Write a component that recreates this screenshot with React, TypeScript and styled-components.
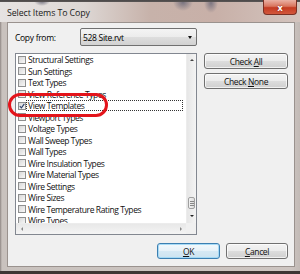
import React from "react";
import styled, { createGlobalStyle } from "styled-components";

const Global = createGlobalStyle`
  html, body { margin: 0; padding: 0; background: #3d3634; }
  body { width: 300px; height: 274px; overflow: hidden; }
  * { box-sizing: border-box; }
`;

const Window = styled.div`
  width: 300px;
  height: 274px;
  display: flex;
  flex-direction: column;
  background: linear-gradient(to right, #8f8784 0, #c9c2be 2px, #cdc5c1 97%, #c2bab6 100%);
  border-bottom: 3px solid #3e3634;
  font-family: "Open Sans", "Noto Sans", sans-serif;
  color: #000;
`;

const TitleBar = styled.div`
  height: 22px;
  flex: none;
  display: flex;
  align-items: center;
  padding-left: 7px;
  background:
    linear-gradient(#4b4848 0, #5a5655 2px, transparent 2px),
    radial-gradient(ellipse 8px 5px at 42px 1px, rgba(60, 60, 80, 0.7), transparent),
    radial-gradient(ellipse 10px 9px at 183px 2px, rgba(50, 60, 90, 0.55), transparent),
    radial-gradient(ellipse 7px 10px at 211px 3px, rgba(50, 60, 90, 0.5), transparent),
    linear-gradient(to right, #e6e3e2 0%, #ddd7d4 28%, #c7b2aa 50%, #c8b0a8 72%, #d3c4be 100%);
`;

const Title = styled.span`
  font-size: 8.8px;
  letter-spacing: -0.1px;
  color: #1a1a1a;
  padding-top: 3px;
  flex: 1;
`;

const CloseButton = styled.div`
  align-self: flex-start;
  width: 34px;
  height: 15px;
  margin-right: 3px;
  border: 1px solid #7a3024;
  border-top: none;
  border-radius: 0 0 4px 4px;
  background: linear-gradient(#eab1a4 0%, #d9745d 45%, #c43b22 55%, #d2573c 100%);
  color: #fff;
  font-size: 9px;
  font-weight: bold;
  display: flex;
  align-items: center;
  justify-content: center;
  text-shadow: 0 0 2px #7a2010;
`;

const Client = styled.div`
  position: relative;
  height: 245px;
  margin: 0 5px 0 7px;
  border: 1px solid #9a928e;
  background: #f0f0f0;
  padding: 5px 6px 7px 7px;
  display: grid;
  grid-template-columns: 182px 84px;
  grid-template-rows: 18px 182px 16px;
  column-gap: 7px;
  row-gap: 7px;
  font-size: 8.5px;
`;

const BottomFrame = styled.div`
  height: 4px;
  flex: none;
`;

const CopyRow = styled.div`
  grid-column: 1;
  grid-row: 1;
  display: flex;
  align-items: center;
`;

const FieldLabel = styled.span`
  width: 65px;
  letter-spacing: -0.3px;
`;

const Combo = styled.div`
  width: 117px;
  height: 18px;
  border: 1px solid #707070;
  border-radius: 2px;
  background: linear-gradient(#f4f4f4 0%, #ececec 50%, #dedede 50%, #d2d2d2 100%);
  display: flex;
  align-items: center;
  padding: 0 4px 0 2px;
`;

const ComboText = styled.span`
  flex: 1;
  letter-spacing: -0.3px;
`;

const Caret = styled.span`
  width: 0;
  height: 0;
  border-left: 2.5px solid transparent;
  border-right: 2.5px solid transparent;
  border-top: 3px solid #111;
`;

const ListBox = styled.div`
  grid-column: 1;
  grid-row: 2;
  border: 1px solid #828790;
  background: #fff;
  display: grid;
  grid-template-columns: 1fr 10px;
  grid-template-rows: 1fr 11px;
  overflow: hidden;
`;

const Items = styled.div`
  overflow: hidden;
  grid-column: 1;
  grid-row: 1;
`;

const Row = styled.div`
  height: 11.5px;
  display: flex;
  align-items: center;
  padding-left: 2px;
`;

const Box = styled.span`
  width: 8px;
  height: 8px;
  flex: none;
  border: 1px solid #8e8f8f;
  background: linear-gradient(135deg, #d8d8d8, #f8f8f8);
  display: flex;
  align-items: center;
  justify-content: center;
`;

const ItemLabel = styled.span<{ $focused?: boolean }>`
  flex: 1;
  margin-right: 3px;
  padding-left: 1px;
  border: 1px dotted ${(p) => (p.$focused ? "#333" : "transparent")};
  height: 11px;
  line-height: 9px;
  font-size: 8.5px;
  letter-spacing: -0.4px;
  white-space: nowrap;
  color: #111;
`;

const VScroll = styled.div`
  grid-column: 2;
  grid-row: 1;
  display: flex;
  flex-direction: column;
  background: linear-gradient(to right, #e6e6e6, #f4f4f4);
  border-left: 1px solid #ececec;
`;

const ArrowCell = styled.div<{ $h?: number }>`
  height: ${(p) => p.$h ?? 11}px;
  width: ${(p) => (p.$h ? "auto" : "11px")};
  flex: none;
  display: flex;
  align-items: center;
  justify-content: center;
`;

const Tri = styled.span<{ $dir: "up" | "down" | "left" | "right"; $c?: string }>`
  width: 0;
  height: 0;
  ${(p) =>
    p.$dir === "up"
      ? `border-left: 2px solid transparent; border-right: 2px solid transparent; border-bottom: 2px solid ${p.$c ?? "#444"};`
      : p.$dir === "down"
      ? `border-left: 2.5px solid transparent; border-right: 2.5px solid transparent; border-top: 2.5px solid ${p.$c ?? "#222"};`
      : p.$dir === "left"
      ? `border-top: 2px solid transparent; border-bottom: 2px solid transparent; border-right: 2px solid ${p.$c ?? "#888"};`
      : `border-top: 2px solid transparent; border-bottom: 2px solid transparent; border-left: 2px solid ${p.$c ?? "#888"};`}
`;

const Track = styled.div`
  flex: 1;
  display: flex;
  flex-direction: column;
  justify-content: flex-end;
  padding: 0 1px;
`;

const Thumb = styled.div`
  height: 12px;
  border: 1px solid #a0a0a0;
  border-radius: 2px;
  background: linear-gradient(to right, #f2f2f2, #dedede);
  display: flex;
  flex-direction: column;
  align-items: center;
  justify-content: center;
  gap: 1px;
`;

const Grip = styled.span`
  width: 4px;
  height: 1px;
  background: #888;
`;

const HScroll = styled.div`
  grid-column: 1;
  grid-row: 2;
  display: flex;
  align-items: center;
  background: linear-gradient(#e8e8e8, #f4f4f4);
  border-top: 1px solid #ececec;
`;

const HTrack = styled.div`
  flex: 1;
`;

const Corner = styled.div`
  grid-column: 2;
  grid-row: 2;
  background: #f0f0f0;
`;

const SideButtons = styled.div`
  grid-column: 2;
  grid-row: 2;
  display: flex;
  flex-direction: column;
  gap: 4px;
  align-self: start;
`;

const Button = styled.div<{ $w?: number; $default?: boolean }>`
  width: ${(p) => (p.$w ? `${p.$w}px` : "100%")};
  height: 16px;
  border: 1px solid ${(p) => (p.$default ? "#3c7fb1" : "#707070")};
  border-radius: 3px;
  background: ${(p) =>
    p.$default
      ? "linear-gradient(#f3f9fc 0%, #e6f1f8 50%, #d6e9f4 50%, #cde3f0 100%)"
      : "linear-gradient(#f3f3f3 0%, #ebebeb 50%, #dddddd 50%, #d0d0d0 100%)"};
  box-shadow: inset 0 0 0 1px ${(p) => (p.$default ? "rgba(160, 215, 245, 0.9)" : "rgba(255,255,255,0.7)")};
  display: flex;
  align-items: center;
  justify-content: center;
  font-size: 8.5px;
  letter-spacing: -0.35px;
  color: #111;
`;

const U = styled.span`
  text-decoration: underline;
`;

const BottomBar = styled.div`
  grid-column: 1 / 3;
  grid-row: 3;
  display: flex;
  justify-content: flex-end;
  gap: 6px;
  margin-top: 1px;
`;

const Annotation = styled.div`
  position: absolute;
  left: 0;
  top: 70px;
  width: 100px;
  height: 24px;
  border: 3px solid #e3141b;
  border-radius: 12px;
  pointer-events: none;
`;

const items = [
  "Structural Settings",
  "Sun Settings",
  "Text Types",
  "View Reference Types",
  "View Templates",
  "Viewport Types",
  "Voltage Types",
  "Wall Sweep Types",
  "Wall Types",
  "Wire Insulation Types",
  "Wire Material Types",
  "Wire Settings",
  "Wire Sizes",
  "Wire Temperature Rating Types",
  "Wire Types",
];

const Check = () => (
  <svg width="6" height="6" viewBox="0 0 6 6">
    <path d="M0.8 3.2 L2.4 4.8 L5.3 0.9" fill="none" stroke="#2a3f6b" strokeWidth="1.1" />
  </svg>
);

export default function App() {
  return (
    <>
      <Global />
      <Window>
        <TitleBar>
          <Title>Select Items To Copy</Title>
          <CloseButton>x</CloseButton>
        </TitleBar>
        <Client>
          <CopyRow>
            <FieldLabel>Copy from:</FieldLabel>
            <Combo>
              <ComboText>528 Site.rvt</ComboText>
              <Caret />
            </Combo>
          </CopyRow>
          <ListBox>
            <Items>
              {items.map((it) => {
                const sel = it === "View Templates";
                return (
                  <Row key={it}>
                    <Box>{sel && <Check />}</Box>
                    <ItemLabel $focused={sel}>{it}</ItemLabel>
                  </Row>
                );
              })}
            </Items>
            <VScroll>
              <ArrowCell $h={11}>
                <Tri $dir="up" />
              </ArrowCell>
              <Track>
                <Thumb>
                  <Grip />
                  <Grip />
                  <Grip />
                </Thumb>
              </Track>
              <ArrowCell $h={14}>
                <Tri $dir="down" />
              </ArrowCell>
            </VScroll>
            <HScroll>
              <ArrowCell>
                <Tri $dir="left" />
              </ArrowCell>
              <HTrack />
              <ArrowCell>
                <Tri $dir="right" />
              </ArrowCell>
            </HScroll>
            <Corner />
          </ListBox>
          <SideButtons>
            <Button>
              Check&nbsp;<U>A</U>ll
            </Button>
            <Button>
              Check&nbsp;<U>N</U>one
            </Button>
          </SideButtons>
          <BottomBar>
            <Button $w={63} $default>
              <U>O</U>K
            </Button>
            <Button $w={62}>
              <U>C</U>ancel
            </Button>
          </BottomBar>
          <Annotation />
        </Client>
        <BottomFrame />
      </Window>
    </>
  );
}
